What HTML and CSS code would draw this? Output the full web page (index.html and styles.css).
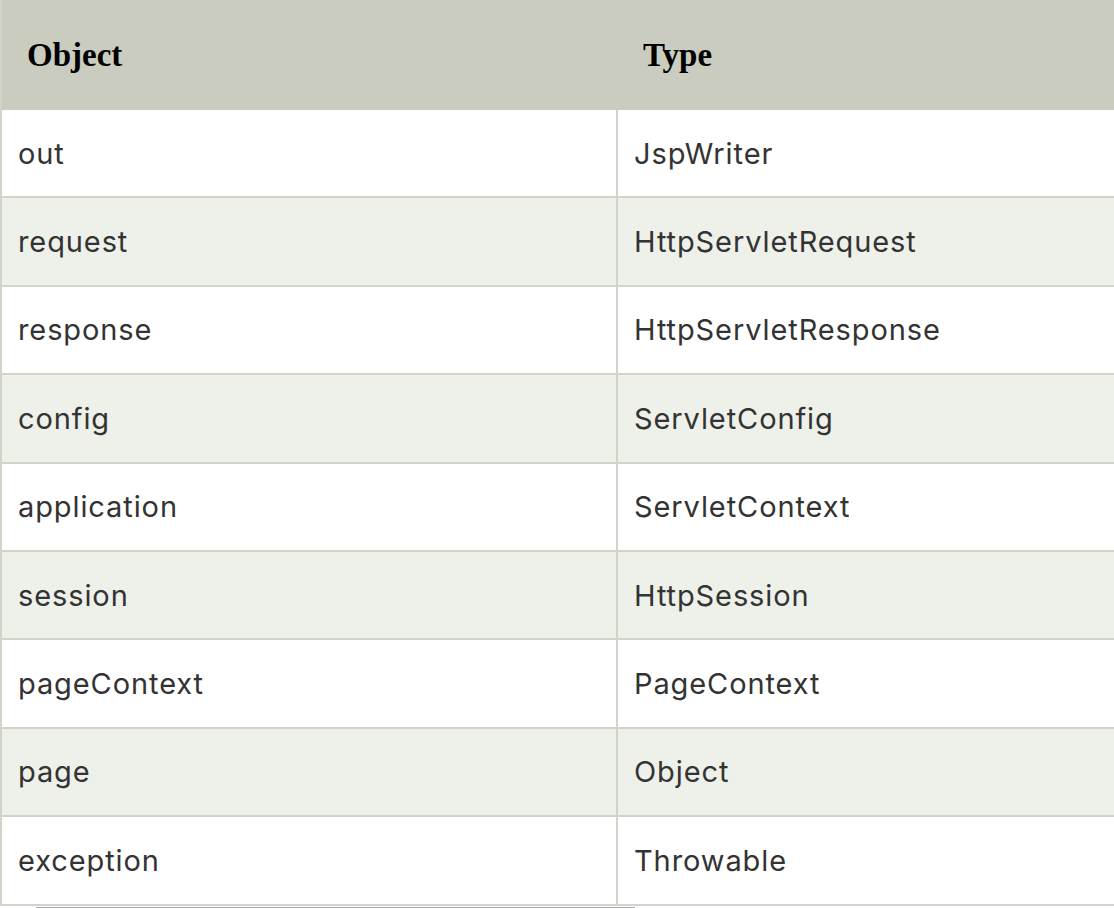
FILE: index.html
```html
<!DOCTYPE html>
<html>
<head>
<meta charset="utf-8">
<link rel="stylesheet" href="styles.css">
</head>
<body>
<table class="objects">
  <thead>
    <tr><th class="col-a">Object</th><th class="col-b">Type</th></tr>
  </thead>
  <tbody>
    <tr><td>out</td><td>JspWriter</td></tr>
    <tr><td>request</td><td>HttpServletRequest</td></tr>
    <tr><td>response</td><td>HttpServletResponse</td></tr>
    <tr><td>config</td><td>ServletConfig</td></tr>
    <tr><td>application</td><td>ServletContext</td></tr>
    <tr><td>session</td><td>HttpSession</td></tr>
    <tr><td>pageContext</td><td>PageContext</td></tr>
    <tr><td>page</td><td>Object</td></tr>
    <tr><td>exception</td><td>Throwable</td></tr>
  </tbody>
</table>
<div class="scroll-bar"></div>
</body>
</html>
```

FILE: styles.css
```css
html, body {
  margin: 0;
  padding: 0;
  background: #ffffff;
}
.objects {
  border-collapse: collapse;
  width: 1130px;
  table-layout: fixed;
  border-left: 2px solid #d2d4ca;
}
.objects th {
  background: #c9ccbf;
  height: 110px;
  padding: 0 0 0 25px;
  text-align: left;
  font-family: "Liberation Serif", "Times New Roman", serif;
  font-weight: bold;
  font-size: 33px;
  color: #000;
  vertical-align: middle;
}
.objects th.col-a { width: 590px; }
.objects th.col-b { padding-left: 26px; }
.objects td {
  height: 86.4px;
  padding: 0 0 0 16px;
  font-family: Inter, "Noto Sans", sans-serif;
  font-size: 29px;
  letter-spacing: 0.9px;
  color: #333333;
  border-bottom: 2px solid #d2d4ca;
  vertical-align: middle;
}
.objects td + td {
  border-left: 2px solid #d2d4ca;
}
.objects tbody tr:nth-child(even) td {
  background: #eef0ea;
}
.scroll-bar {
  margin: 1px 0 0 36px;
  width: 599px;
  height: 3px;
  background: #aaaaaa;
}
```
